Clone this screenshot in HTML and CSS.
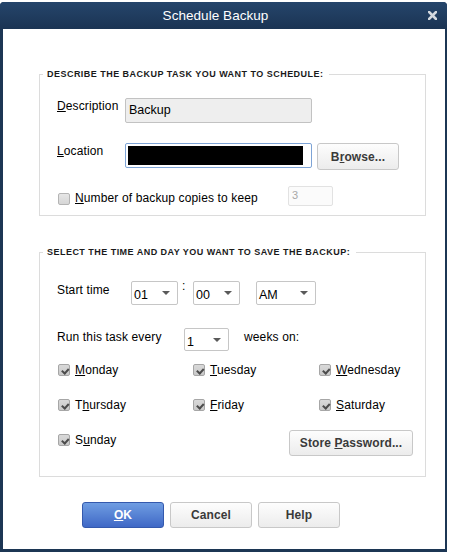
FILE: index.html
```html
<!DOCTYPE html>
<html>
<head>
<meta charset="utf-8">
<title>Schedule Backup</title>
<link rel="stylesheet" href="styles.css">
</head>
<body>
<div class="dialog">
  <div class="titlebar">
    <span class="title">Schedule Backup</span>
    <svg class="close" width="9" height="9" viewBox="0 0 9 9"><path d="M1 1L8 8M8 1L1 8" stroke="#d3d8de" stroke-width="2.6" stroke-linecap="square"/></svg>
  </div>
  <div class="content">
    <fieldset class="group g1">
      <legend>DESCRIBE THE BACKUP TASK YOU WANT TO SCHEDULE:</legend>
      <div class="inner">
        <div class="field-row">
          <span class="label"><u>D</u>escription</span>
          <div class="textbox readonly">Backup</div>
        </div>
        <div class="field-row loc">
          <span class="label"><u>L</u>ocation</span>
          <div class="textbox focus"><span class="redact"></span></div>
          <button class="btn browse">B<u>r</u>owse...</button>
        </div>
        <div class="copies-row">
          <span class="check"></span>
          <span class="copies-label"><u>N</u>umber of backup copies to keep</span>
          <div class="spin">3</div>
        </div>
      </div>
    </fieldset>

    <fieldset class="group g2">
      <legend>SELECT THE TIME AND DAY YOU WANT TO SAVE THE BACKUP:</legend>
      <div class="inner inner2">
        <div class="time-row">
          <span class="label start-label">Start time</span>
          <div class="select w47"><span>01</span><i class="arrow"></i></div>
          <span class="colon">:</span>
          <div class="select w47"><span>00</span><i class="arrow"></i></div>
          <div class="select w59 am"><span>AM</span><i class="arrow"></i></div>
        </div>
        <div class="every-row">
          <span class="label every-label">Run this task every</span>
          <div class="select w45 tall"><span>1</span><i class="arrow"></i></div>
          <span class="label weeks">weeks on:</span>
        </div>
        <div class="days">
          <label class="day"><span class="check on"></span><span><u>M</u>onday</span></label>
          <label class="day"><span class="check on"></span><span><u>T</u>uesday</span></label>
          <label class="day"><span class="check on"></span><span><u>W</u>ednesday</span></label>
          <label class="day"><span class="check on"></span><span>T<u>h</u>ursday</span></label>
          <label class="day"><span class="check on"></span><span><u>F</u>riday</span></label>
          <label class="day"><span class="check on"></span><span><u>S</u>aturday</span></label>
          <label class="day"><span class="check on"></span><span>S<u>u</u>nday</span></label>
          <button class="btn store">Store <u>P</u>assword...</button>
        </div>
      </div>
    </fieldset>

    <div class="actions">
      <button class="btn primary"><u>O</u>K</button>
      <button class="btn cancel">Cancel</button>
      <button class="btn">Help</button>
    </div>
  </div>
</div>
</body>
</html>
```
FILE: styles.css
```css
* { box-sizing: border-box; }
html, body { margin: 0; padding: 0; background: #fff; }
body {
  font-family: "Liberation Sans", Arial, sans-serif;
  font-size: 12px;
  color: #000;
}
u { text-decoration: underline; text-underline-offset: 1px; }

.dialog {
  margin-top: 2px;
  width: 447px;
  height: 550px;
  background: #1c3654;
  border-radius: 4px 4px 0 0;
  padding-bottom: 3px;
  display: flex;
  flex-direction: column;
}
.titlebar {
  height: 27px;
  flex: none;
  display: flex;
  align-items: center;
  background: linear-gradient(#25456b, #1b3453);
  border-radius: 4px 4px 0 0;
  padding-left: 3px;
}
.title {
  flex: 1;
  text-align: center;
  color: #fff;
  font-size: 13.5px;
  letter-spacing: 0.05px;
}
.close { flex: none; margin: 0 10px 0 0; }

.content {
  flex: 1;
  background: #fff;
  margin: 0 2px 0 3px;
  padding-top: 40px;
}

.group {
  margin: 0 0 0 36px;
  padding: 0;
  width: 387px;
  border: 1px solid #dcdcdc;
  min-width: 0;
}
.group legend {
  font-size: 9px;
  font-weight: bold;
  letter-spacing: 0.47px;
  line-height: 10px;
  color: #1a1a1a;
  margin-left: 3px;
  padding: 0 6px 0 4px;
}
.g2 { margin-top: 31px; }

.inner { padding: 19px 12px 9px 17px; }
.inner2 { padding-top: 24px; padding-bottom: 20px; }

.label { line-height: 14px; letter-spacing: 0.13px; }

.field-row { display: flex; align-items: flex-start; }
.field-row .label { width: 68px; padding-top: 1px; }
.field-row.loc { margin-top: 20px; }

.textbox {
  width: 187px;
  height: 25px;
  border: 1px solid #c2c2c2;
  border-radius: 2px;
  padding: 0 3px;
  line-height: 23px;
  font-size: 12.5px;
}
.textbox.readonly { background: #eeeeee; }
.textbox.focus { border-color: #7ea4d6; padding: 2px; }
.redact { display: block; width: 175px; height: 19px; background: #000; }

.btn {
  font-family: "Liberation Sans", Arial, sans-serif;
  font-size: 12px;
  font-weight: bold;
  color: #3a3a3a;
  background: linear-gradient(#fdfdfd, #ececec);
  border: 1px solid #c8c8c8;
  border-radius: 3px;
  padding: 0;
  letter-spacing: 0.1px;
}
.browse { width: 82px; height: 27px; margin-left: 5px; }

.copies-row { display: flex; align-items: flex-start; margin-top: 16px; }
.copies-row .check { margin: 7px 0 0 1px; }
.copies-label { width: 213px; margin-left: 5px; padding-top: 5px; line-height: 14px; letter-spacing: 0.13px; }
.spin {
  width: 45px;
  height: 20px;
  border: 1px solid #e2e2e2;
  border-radius: 2px;
  background: #fbfbfb;
  color: #a8a8a8;
  font-size: 11px;
  padding: 2px 0 0 3px;
  line-height: 12px;
}

.check {
  flex: none;
  display: inline-block;
  width: 12px;
  height: 12px;
  border: 1px solid #b4b4b4;
  border-radius: 2px;
  background: linear-gradient(#e6e6e6, #d6d6d6);
  position: relative;
}
.check.on { border-color: #a6a6a6; background: linear-gradient(#d9d9d9, #c9c9c9); }
.check.on::after {
  content: "";
  position: absolute;
  left: 2px;
  top: 1px;
  width: 5px;
  height: 3px;
  border-left: 2px solid #4c4c4c;
  border-bottom: 2px solid #4c4c4c;
  transform: rotate(-48deg) translate(-1px, 2px);
}

.time-row, .every-row { display: flex; align-items: flex-start; }
.start-label { width: 74px; padding-top: 2px; }
.select {
  position: relative;
  height: 24px;
  border: 1px solid #c6c6c6;
  border-radius: 2px;
  background: #fff;
  padding: 0 0 0 2px;
  line-height: 24px;
  font-size: 12.5px;
}
.select span { display: block; padding-top: 1px; }
.select .arrow {
  position: absolute;
  right: 7px;
  top: 9px;
  width: 0;
  height: 0;
  border-left: 4px solid transparent;
  border-right: 4px solid transparent;
  border-top: 4px solid #5a5a5a;
}
.w47 { width: 47px; }
.w59 { width: 60px; }
.w45 { width: 45px; }
.tall { height: 23px; line-height: 24px; }
.colon { width: 15px; padding-left: 4px; line-height: 10px; }
.am { margin-left: 16px; }

.every-row { margin-top: 23px; }
.every-label { width: 127px; padding-top: 2px; }
.weeks { margin-left: 15px; padding-top: 2px; }

.days {
  display: grid;
  grid-template-columns: 135px 126px 1fr;
  row-gap: 23px;
  margin-top: 13px;
  padding-left: 1px;
}
.day { display: flex; align-items: flex-start; gap: 5px; height: 12px; }
.day span:last-child { line-height: 14px; margin-top: -1px; letter-spacing: 0.13px; }
.store {
  grid-column: 2 / 4;
  justify-self: end;
  align-self: start;
  width: 124px;
  height: 26px;
  margin-top: -4px;
}

.actions {
  display: flex;
  gap: 6px;
  margin: 25px 0 0 79px;
}
.actions .btn { width: 82px; height: 26px; }
.primary {
  color: #fff;
  background: linear-gradient(#6f9de2, #3f68c6);
  border-color: #3459ad;
}
```
